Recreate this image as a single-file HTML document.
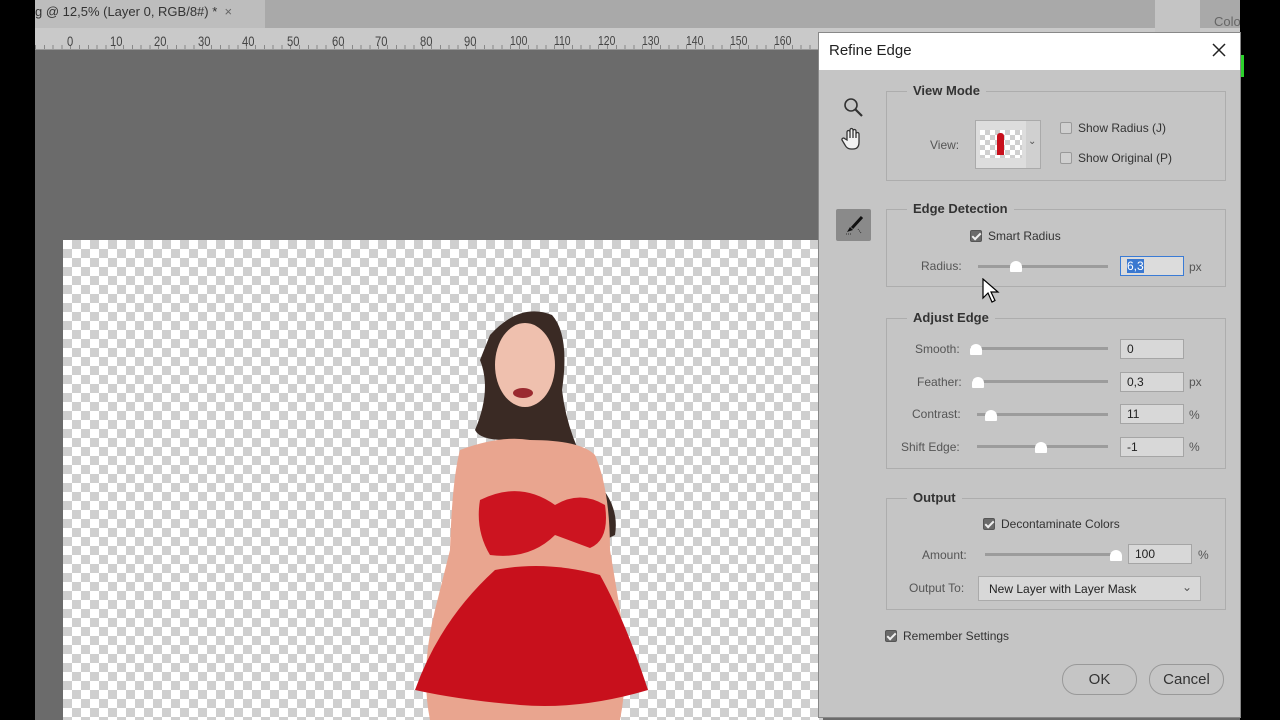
<!DOCTYPE html>
<html><head><meta charset="utf-8"><style>
*{margin:0;padding:0;box-sizing:border-box}
body{width:1280px;height:720px;overflow:hidden;background:#6b6b6b;position:relative;font-family:"Liberation Sans",sans-serif;font-size:12px;color:#222}
.a{position:absolute}
.chk{background-color:#fff;background-image:linear-gradient(45deg,#cfcfcf 25%,transparent 25%,transparent 75%,#cfcfcf 75%),linear-gradient(45deg,#cfcfcf 25%,transparent 25%,transparent 75%,#cfcfcf 75%);background-size:18px 18px;background-position:0 0,9px 9px}
.grp{position:absolute;border:1px solid #adadad;}
.gt{position:absolute;top:-9px;left:20px;background:#c5c5c5;padding:0 6px;font-weight:bold;font-size:13px;color:#333}
.lbl{position:absolute;color:#555;font-size:12px;text-align:right}
.trk{position:absolute;height:3px;background:#9c9c9c}
.th{position:absolute;width:12px;height:11px;background:#fff;border-radius:6px 6px 1px 1px}
.inp{position:absolute;height:20px;background:#d8d8d8;border:1px solid #a5a5a5;font-size:12px;padding:2px 6px;color:#222}
.cb{position:absolute;width:12px;height:12px;border:1px solid #999;background:#d0d0d0;border-radius:2px}
.cb.on{background:#6a6a6a;border-color:#555}
.cb.on:after{content:"";position:absolute;left:3px;top:0px;width:3px;height:7px;border:solid #eee;border-width:0 2px 2px 0;transform:rotate(45deg)}
.t{position:absolute;font-size:12px;color:#333;white-space:nowrap}
.u{position:absolute;color:#555;font-size:12px}
.rl span{position:absolute;top:5px;transform:scaleX(0.8);transform-origin:left}
</style></head><body>
<div class="a" style="left:0;top:0;width:35px;height:720px;background:#000"></div>
<div class="a" style="left:35px;top:0;width:1210px;height:28px;background:#a9a9a9"></div>
<div class="a" style="left:35px;top:0;width:230px;height:28px;background:#bdbdbd;font-size:13px;color:#333;padding:4px 0 0 0">g @ 12,5% (Layer 0, RGB/8#) * &nbsp;<span style="color:#666">×</span></div>
<div class="a rl" style="left:35px;top:28px;width:1210px;height:22px;background:#c9c9c9;border-bottom:1px solid #999;font-size:14px;color:#444;white-space:nowrap;overflow:hidden;background-image:repeating-linear-gradient(90deg,#888 0 1px,transparent 1px 8.8px);background-size:100% 5px;background-repeat:no-repeat;background-position:0 17px">
<span style="left:32px">0</span><span style="left:75px">10</span><span style="left:119px">20</span><span style="left:163px">30</span><span style="left:207px">40</span><span style="left:252px">50</span><span style="left:297px">60</span><span style="left:340px">70</span><span style="left:385px">80</span><span style="left:429px">90</span><span style="left:475px;font-size:13px">100</span><span style="left:519px;font-size:13px">110</span><span style="left:563px;font-size:13px">120</span><span style="left:607px;font-size:13px">130</span><span style="left:651px;font-size:13px">140</span><span style="left:695px;font-size:13px">150</span><span style="left:739px;font-size:13px">160</span>
</div>
<div class="a" style="left:1155px;top:0;width:45px;height:32px;background:#c4c4c4"></div>
<div class="a" style="left:1214px;top:14px;font-size:13px;color:#666">Colo</div>
<div class="a" style="left:1240px;top:0;width:40px;height:720px;background:#000"></div>
<div class="a" style="left:1232px;top:55px;width:12px;height:22px;background:#2bd12b"></div>
<div class="a chk" style="left:63px;top:240px;width:760px;height:480px"></div>
<svg class="a" style="left:380px;top:290px" width="300" height="430" viewBox="0 0 300 430">
<path d="M110 45 Q140 12 172 25 Q190 45 182 100 Q188 150 215 190 Q240 215 235 245 L225 250 Q215 200 190 175 L125 150 Q100 150 95 140 Q112 100 100 70Z" fill="#3a2a24"/>
<path d="M80 160 Q120 145 150 150 Q200 150 215 165 Q230 200 230 260 L240 320 Q250 380 240 430 L50 430 Q40 380 55 320 L70 260 Q72 190 80 160Z" fill="#e9a58f"/>
<ellipse cx="145" cy="75" rx="30" ry="42" fill="#efc0ae"/>
<ellipse cx="143" cy="103" rx="10" ry="5" fill="#9a2a30"/>
<path d="M100 210 Q140 190 175 215 Q200 200 225 215 Q230 250 210 258 L175 245 Q150 270 110 265 Q95 240 100 210Z" fill="#cc1420"/>
<path d="M115 280 Q165 270 220 285 Q245 330 268 400 Q200 420 140 415 Q80 410 35 400 Q60 330 115 280Z" fill="#c8101c"/>
</svg>
<!-- dialog -->
<div class="a" style="left:818px;top:32px;width:423px;height:686px;background:#c5c5c5;border:1px solid #888"></div>
<div class="a" style="left:819px;top:33px;width:421px;height:37px;background:#fff"></div>
<div class="a" style="left:829px;top:42px;font-size:15px;color:#222">Refine Edge</div>
<svg class="a" style="left:1211px;top:42px" width="16" height="16"><path d="M2 2L14 14M14 2L2 14" stroke="#222" stroke-width="1.5"/></svg>
<svg class="a" style="left:841px;top:95px" width="24" height="24"><circle cx="10" cy="10" r="6" fill="none" stroke="#333" stroke-width="1.6"/><path d="M14.5 14.5L21 21" stroke="#333" stroke-width="2.2"/></svg>
<svg class="a" style="left:841px;top:126px" width="24" height="26"><path d="M6 14V6a1.5 1.5 0 013 0v6V4a1.5 1.5 0 013 0v8V5a1.5 1.5 0 013 0v7V8a1.5 1.5 0 013 0v8q0 7-6 7h-2q-4 0-6-4l-3-5a1.5 1.5 0 012.5-1.5z" fill="#f2f2f2" stroke="#333" stroke-width="1.3"/></svg>
<div class="a" style="left:836px;top:209px;width:35px;height:32px;background:#8a8a8a;border-radius:2px"></div>
<svg class="a" style="left:843px;top:214px" width="24" height="22"><path d="M19 3L9 14" stroke="#111" stroke-width="3"/><path d="M4 18l3-5 3 3z" fill="#111"/><path d="M3 20h6M15 15l3 4" stroke="#333" stroke-dasharray="1 1"/></svg>

<div class="grp" style="left:886px;top:91px;width:340px;height:90px"><div class="gt">View Mode</div></div>
<div class="lbl" style="left:930px;top:138px">View:</div>
<div class="a" style="left:975px;top:120px;width:66px;height:49px;background:#ddd;border:1px solid #aaa"></div>
<div class="a chk" style="left:980px;top:130px;width:42px;height:28px;background-size:10px 10px;background-position:0 0,5px 5px"></div>
<div class="a" style="left:997px;top:133px;width:7px;height:22px;background:#c8101c;border-radius:3px 3px 0 0"></div>
<div class="a" style="left:1026px;top:121px;width:14px;height:47px;background:#d0d0d0;font-size:10px;color:#555;padding:15px 0 0 2px">⌄</div>
<div class="cb" style="left:1060px;top:122px"></div><div class="t" style="left:1078px;top:121px">Show Radius (J)</div>
<div class="cb" style="left:1060px;top:152px"></div><div class="t" style="left:1078px;top:151px">Show Original (P)</div>

<div class="grp" style="left:886px;top:209px;width:340px;height:78px"><div class="gt">Edge Detection</div></div>
<div class="cb on" style="left:970px;top:230px"></div><div class="t" style="left:988px;top:229px">Smart Radius</div>
<div class="lbl" style="left:921px;top:259px">Radius:</div>
<div class="trk" style="left:978px;top:265px;width:130px"></div><div class="th" style="left:1010px;top:261px"></div>
<div class="inp" style="left:1120px;top:256px;width:64px;border-color:#3a7bd5;background:#dcdcdc"><span style="background:#3a78d0;color:#fff">6,3</span></div>
<div class="u" style="left:1189px;top:260px">px</div>

<div class="grp" style="left:886px;top:318px;width:340px;height:151px"><div class="gt">Adjust Edge</div></div>
<div class="lbl" style="left:915px;top:342px">Smooth:</div>
<div class="trk" style="left:970px;top:347px;width:138px"></div><div class="th" style="left:970px;top:344px"></div>
<div class="inp" style="left:1120px;top:339px;width:64px">0</div>
<div class="lbl" style="left:917px;top:375px">Feather:</div>
<div class="trk" style="left:972px;top:380px;width:136px"></div><div class="th" style="left:972px;top:377px"></div>
<div class="inp" style="left:1120px;top:372px;width:64px">0,3</div><div class="u" style="left:1189px;top:375px">px</div>
<div class="lbl" style="left:912px;top:407px">Contrast:</div>
<div class="trk" style="left:977px;top:413px;width:131px"></div><div class="th" style="left:985px;top:410px"></div>
<div class="inp" style="left:1120px;top:404px;width:64px">11</div><div class="u" style="left:1189px;top:408px">%</div>
<div class="lbl" style="left:901px;top:440px">Shift Edge:</div>
<div class="trk" style="left:977px;top:445px;width:131px"></div><div class="th" style="left:1035px;top:442px"></div>
<div class="inp" style="left:1120px;top:437px;width:64px">-1</div><div class="u" style="left:1189px;top:440px">%</div>

<div class="grp" style="left:886px;top:498px;width:340px;height:112px"><div class="gt">Output</div></div>
<div class="cb on" style="left:983px;top:518px"></div><div class="t" style="left:1001px;top:517px">Decontaminate Colors</div>
<div class="lbl" style="left:922px;top:548px">Amount:</div>
<div class="trk" style="left:985px;top:553px;width:130px"></div><div class="th" style="left:1110px;top:550px"></div>
<div class="inp" style="left:1128px;top:544px;width:64px">100</div><div class="u" style="left:1198px;top:548px">%</div>
<div class="lbl" style="left:909px;top:581px">Output To:</div>
<div class="a" style="left:978px;top:576px;width:223px;height:25px;background:#d8d8d8;border:1px solid #aaa;font-size:12px;padding:5px 10px;color:#222">New Layer with Layer Mask<span style="position:absolute;right:8px;top:3px;color:#555">⌄</span></div>
<div class="cb on" style="left:885px;top:630px"></div><div class="t" style="left:903px;top:629px">Remember Settings</div>
<div class="a" style="left:1062px;top:664px;width:75px;height:31px;border:1px solid #999;border-radius:15px;font-size:15px;text-align:center;padding-top:6px;color:#333">OK</div>
<div class="a" style="left:1149px;top:664px;width:75px;height:31px;border:1px solid #999;border-radius:15px;font-size:15px;text-align:center;padding-top:6px;color:#333">Cancel</div>
<svg class="a" style="left:982px;top:278px" width="18" height="26"><path d="M1 1V20L6 15L10 24L13 22.5L9 14H16Z" fill="#fff" stroke="#000" stroke-width="1.2"/></svg>
</body></html>
